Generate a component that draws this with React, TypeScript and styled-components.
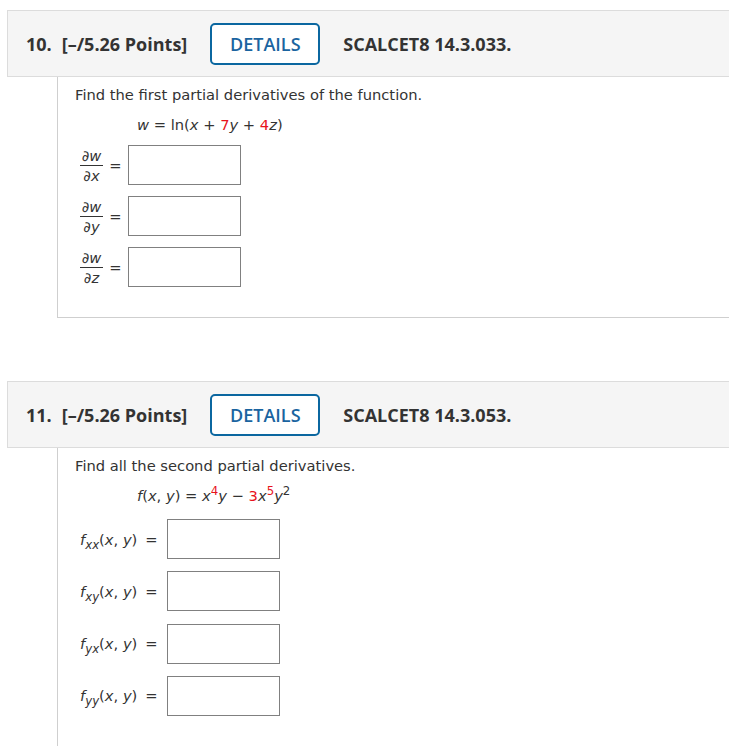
import React from 'react';
import styled, { createGlobalStyle } from 'styled-components';

const GlobalStyle = createGlobalStyle`
  body {
    margin: 0;
    background: #fff;
    overflow: hidden;
  }
`;

const Page = styled.div`
  padding: 10px 0 0 7px;
`;

const Question = styled.section`
  margin-right: -20px;
  & + & {
    margin-top: 63px;
  }
`;

const Header = styled.div`
  height: 65px;
  display: flex;
  align-items: center;
  padding-left: 18px;
  background: #f5f5f5;
  border: 1px solid #dcdcdc;
  font-family: 'Open Sans', sans-serif;
  font-weight: 700;
  font-size: 18px;
  color: #333;
`;

const Num = styled.span`
  margin-right: 10px;
`;

const DetailsBtn = styled.button`
  width: 110px;
  height: 42px;
  margin: 0 23px;
  border: 2px solid #0b67a0;
  border-radius: 5px;
  background: #fff;
  color: #1a64a0;
  font-family: 'Open Sans', sans-serif;
  font-weight: 600;
  font-size: 18px;
  cursor: pointer;
`;

const Body = styled.div<{ open?: boolean }>`
  margin-left: 50px;
  padding: 9px 0 0 17px;
  border-left: 1px solid #cfcfcf;
  border-bottom: ${(p) => (p.open ? 'none' : '1px solid #cfcfcf')};
  height: ${(p) => (p.open ? '300px' : '231px')};
  font-family: 'DejaVu Sans', Verdana, sans-serif;
  font-size: 14.7px;
  color: #333;
`;

const Prompt = styled.p`
  margin: 0;
  line-height: 18px;
`;

const Formula = styled.div`
  margin: 12px 0 0 62px;
  line-height: 18px;
`;

const V = styled.i`
  font-style: italic;
`;

const Red = styled.span`
  color: #e8121b;
`;

const Sup = styled.sup<{ red?: boolean }>`
  font-size: 0.8em;
  line-height: 0;
  color: ${(p) => (p.red ? '#e8121b' : 'inherit')};
`;

const Sub = styled.sub`
  font-size: 0.8em;
  line-height: 0;
  font-style: italic;
`;

const Rows = styled.div<{ gap: number; top: number }>`
  display: flex;
  flex-direction: column;
  gap: ${(p) => p.gap}px;
  margin-top: ${(p) => p.top}px;
`;

const Row = styled.div`
  display: flex;
  align-items: center;
  padding-left: 5px;
`;

const Frac = styled.span`
  display: inline-flex;
  flex-direction: column;
  align-items: center;
  width: 23px;
  line-height: 17px;
  font-style: italic;
`;

const FracTop = styled.span`
  border-bottom: 1px solid #333;
  width: 100%;
  text-align: center;
  padding-bottom: 1px;
`;

const FracBottom = styled.span`
  padding-top: 1px;
`;

const Eq = styled.span<{ w: number }>`
  width: ${(p) => p.w}px;
  text-align: center;
`;

const Label = styled.span`
  width: 56px;
  white-space: nowrap;
`;

const Answer = styled.input`
  width: 113px;
  height: 40px;
  box-sizing: border-box;
  border: 1px solid #808080;
  background: #fff;
  margin: 0;
  padding: 0 6px;
`;

const Partial = ({ v }: { v: string }) => (
  <Row>
    <Frac>
      <FracTop>∂w</FracTop>
      <FracBottom>∂{v}</FracBottom>
    </Frac>
    <Eq w={25}>=</Eq>
    <Answer type="text" />
  </Row>
);

const Second = ({ s }: { s: string }) => (
  <Row>
    <Label>
      <V>f</V>
      <Sub>{s}</Sub>(<V>x</V>, <V>y</V>)
    </Label>
    <Eq w={31}>=</Eq>
    <Answer type="text" />
  </Row>
);

const App = () => (
  <Page>
    <GlobalStyle />
    <Question>
      <Header>
        <Num>10.</Num>
        <span>[–/5.26 Points]</span>
        <DetailsBtn>DETAILS</DetailsBtn>
        <span>SCALCET8 14.3.033.</span>
      </Header>
      <Body>
        <Prompt>Find the first partial derivatives of the function.</Prompt>
        <Formula>
          <V>w</V> = ln(<V>x</V> + <Red>7</Red><V>y</V> + <Red>4</Red><V>z</V>)
        </Formula>
        <Rows gap={11} top={11}>
          <Partial v="x" />
          <Partial v="y" />
          <Partial v="z" />
        </Rows>
      </Body>
    </Question>
    <Question>
      <Header>
        <Num>11.</Num>
        <span>[–/5.26 Points]</span>
        <DetailsBtn>DETAILS</DetailsBtn>
        <span>SCALCET8 14.3.053.</span>
      </Header>
      <Body open>
        <Prompt>Find all the second partial derivatives.</Prompt>
        <Formula>
          <V>f</V>(<V>x</V>, <V>y</V>) = <V>x</V>
          <Sup red>4</Sup>
          <V>y</V> − <Red>3</Red>
          <V>x</V>
          <Sup red>5</Sup>
          <V>y</V>
          <Sup>2</Sup>
        </Formula>
        <Rows gap={12.3} top={14}>
          <Second s="xx" />
          <Second s="xy" />
          <Second s="yx" />
          <Second s="yy" />
        </Rows>
      </Body>
    </Question>
  </Page>
);

export default App;
